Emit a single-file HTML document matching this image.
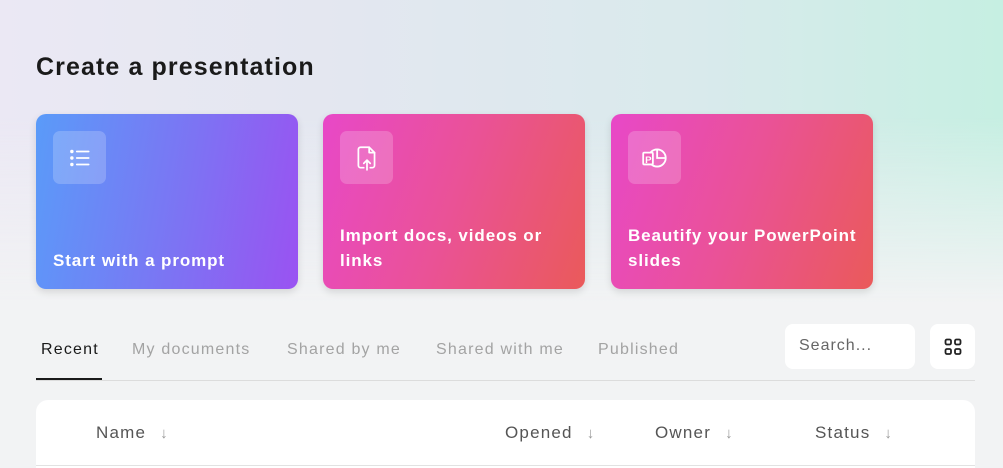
<!DOCTYPE html>
<html><head><meta charset="utf-8"><style>
*{margin:0;padding:0;box-sizing:border-box}
html,body{width:1003px;height:468px;overflow:hidden}
body{font-family:"Liberation Sans",sans-serif;position:relative;
background:linear-gradient(180deg,rgba(242,243,244,0) 0%,rgba(242,243,244,0) 25%,#f2f3f4 65%),linear-gradient(90deg,#ebe8f4 0%,#e3e7f0 35%,#d9eaec 70%,#c6efe2 100%);}
h1{position:absolute;left:36px;top:53px;font-size:25px;font-weight:bold;color:#1a1a1a;letter-spacing:1.1px}
.card{position:absolute;top:114px;width:262px;height:175px;border-radius:10px;box-shadow:0 3px 8px rgba(0,0,0,.12);color:#fff}
.card .ic{position:absolute;left:17px;top:17px;width:53px;height:53px;border-radius:7px;background:rgba(255,255,255,.2);display:flex;align-items:center;justify-content:center}
.card .t{position:absolute;left:17px;bottom:16px;font-size:17px;font-weight:bold;line-height:25px;letter-spacing:.9px}
.tab{position:absolute;top:341px;font-size:16px;color:#a3a3a3;letter-spacing:1.2px}
.line{position:absolute;left:36px;top:380px;width:939px;height:1px;background:#dcdcdc}
.ul{position:absolute;left:36px;top:378px;width:66px;height:2px;background:#1a1a1a}
.search{position:absolute;left:785px;top:324px;width:130px;height:45px;background:#fff;border-radius:8px;font-size:16px;color:#666;padding:13px 14px;letter-spacing:1px}
.grid{position:absolute;left:930px;top:324px;width:45px;height:45px;background:#fff;border-radius:8px;display:flex;align-items:center;justify-content:center}
.table{position:absolute;left:36px;top:400px;width:939px;height:80px;background:#fff;border-radius:12px}
.th{position:absolute;top:423px;font-size:17px;color:#555;letter-spacing:1.2px}
.th span{color:#999;margin-left:14px;font-size:15px}
.hl{position:absolute;left:36px;top:465px;width:939px;height:1px;background:#e2e2e2}
</style></head><body>
<h1>Create a presentation</h1>
<div class="card" style="left:36px;background:linear-gradient(100deg,#5a9bf9 0%,#7c74f3 55%,#9a52f2 100%)">
<div class="ic"><svg width="26" height="26" viewBox="0 0 24 24" fill="none" stroke="#fff" stroke-width="1.6" stroke-linecap="round"><path d="M9 6h11M9 12h11M9 18h11"/><circle cx="4.5" cy="6" r=".8" fill="#fff"/><circle cx="4.5" cy="12" r=".8" fill="#fff"/><circle cx="4.5" cy="18" r=".8" fill="#fff"/></svg></div>
<div class="t">Start with a prompt</div></div>
<div class="card" style="left:323px;background:linear-gradient(110deg,#e848c8 0%,#ea5296 50%,#ea5a5a 100%)">
<div class="ic"><svg width="26" height="28" viewBox="0 0 24 26" fill="none" stroke="#fff" stroke-width="1.6" stroke-linecap="round" stroke-linejoin="round"><path d="M9 22H6a2 2 0 0 1-2-2V5a2 2 0 0 1 2-2h8l5 5v12a2 2 0 0 1-2 2h-2"/><path d="M14 3v5h5"/><path d="M12 24v-9M9 18l3-3 3 3"/></svg></div>
<div class="t">Import docs, videos or<br>links</div></div>
<div class="card" style="left:611px;background:linear-gradient(110deg,#e848c8 0%,#ea5296 50%,#ea5a5a 100%)">
<div class="ic"><svg width="30" height="28" viewBox="0 0 28 26" fill="none" stroke="#fff" stroke-width="1.7"><circle cx="16" cy="13" r="8"/><path d="M16 5v8h8"/><rect x="3" y="8" width="9" height="11" rx="1" fill="#ef5fb8" stroke="#fff"/><text x="4.8" y="17.5" font-size="9" font-weight="bold" fill="#fff" stroke="none" font-family="Liberation Sans">P</text></svg></div>
<div class="t">Beautify your PowerPoint<br>slides</div></div>
<div class="tab" style="left:41px;color:#1a1a1a">Recent</div>
<div class="tab" style="left:132px">My documents</div>
<div class="tab" style="left:287px">Shared by me</div>
<div class="tab" style="left:436px">Shared with me</div>
<div class="tab" style="left:598px">Published</div>
<div class="line"></div><div class="ul"></div>
<div class="search">Search...</div>
<div class="grid"><svg width="18" height="18" viewBox="0 0 18 18" fill="none" stroke="#222" stroke-width="1.8"><rect x="1.5" y="1.5" width="5.5" height="5" rx="1.5"/><rect x="11" y="1.5" width="5.5" height="5" rx="1.5"/><rect x="1.5" y="11" width="5.5" height="5" rx="1.5"/><rect x="11" y="11" width="5.5" height="5" rx="1.5"/></svg></div>
<div class="table"></div>
<div class="th" style="left:96px">Name<span>↓</span></div>
<div class="th" style="left:505px">Opened<span>↓</span></div>
<div class="th" style="left:655px">Owner<span>↓</span></div>
<div class="th" style="left:815px">Status<span>↓</span></div>
<div class="hl"></div>
</body></html>
